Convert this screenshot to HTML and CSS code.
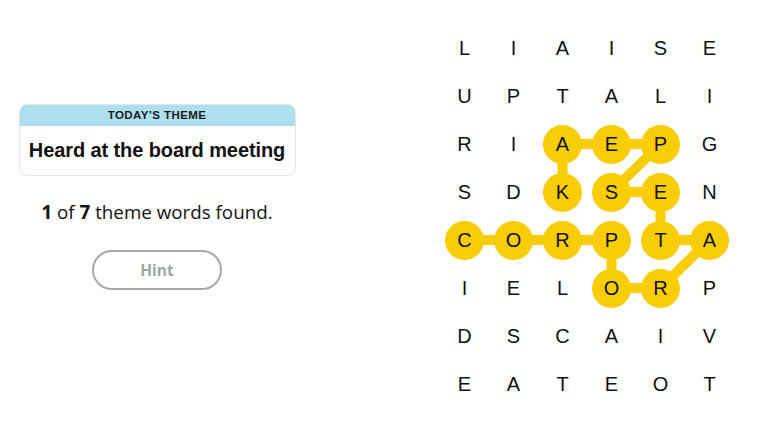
FILE: index.html
```html
<!DOCTYPE html>
<html>
<head>
<meta charset="utf-8">
<link rel="stylesheet" href="styles.css">
</head>
<body>
<main class="page">
  <section class="side">
    <div class="theme-card">
      <div class="theme-head">TODAY’S THEME</div>
      <div class="theme-title">Heard at the board meeting</div>
    </div>
    <p class="progress"><b>1</b> of <b>7</b> theme words found.</p>
    <button class="hint">Hint</button>
  </section>
  <section class="board">
    <svg class="links" width="294" height="384" viewBox="0 0 294 384">
      <polyline points="24.5,216 73.5,216 122.5,216 171.5,216 171.5,264 220.5,264 269.5,216 220.5,216 220.5,168 171.5,168 220.5,120 171.5,120 122.5,120 122.5,168" fill="none" stroke="#f8cd05" stroke-width="10" stroke-linejoin="round"/>
    </svg>
    <div class="grid">
      <span class="cell">L</span><span class="cell">I</span><span class="cell">A</span><span class="cell">I</span><span class="cell">S</span><span class="cell">E</span>
      <span class="cell">U</span><span class="cell">P</span><span class="cell">T</span><span class="cell">A</span><span class="cell">L</span><span class="cell">I</span>
      <span class="cell">R</span><span class="cell">I</span><span class="cell on">A</span><span class="cell on">E</span><span class="cell on">P</span><span class="cell">G</span>
      <span class="cell">S</span><span class="cell">D</span><span class="cell on">K</span><span class="cell on">S</span><span class="cell on">E</span><span class="cell">N</span>
      <span class="cell on">C</span><span class="cell on">O</span><span class="cell on">R</span><span class="cell on">P</span><span class="cell on">T</span><span class="cell on">A</span>
      <span class="cell">I</span><span class="cell">E</span><span class="cell">L</span><span class="cell on">O</span><span class="cell on">R</span><span class="cell">P</span>
      <span class="cell">D</span><span class="cell">S</span><span class="cell">C</span><span class="cell">A</span><span class="cell">I</span><span class="cell">V</span>
      <span class="cell">E</span><span class="cell">A</span><span class="cell">T</span><span class="cell">E</span><span class="cell">O</span><span class="cell">T</span>
    </div>
  </section>
</main>
</body>
</html>
```

FILE: styles.css
```css
* { box-sizing: border-box; }
html, body { margin: 0; padding: 0; background: #fff; }
body {
  width: 768px;
  height: 432px;
  overflow: hidden;
  font-family: "Liberation Sans", Arial, sans-serif;
  color: #121212;
}
.page {
  display: flex;
  height: 432px;
}
.side {
  width: 314px;
  padding-top: 104px;
  display: flex;
  flex-direction: column;
  align-items: center;
}
.theme-card {
  width: 277px;
  border: 1px solid #e6e6e6;
  border-radius: 8px;
  overflow: hidden;
  background: #fff;
}
.theme-head {
  background: #aedfee;
  height: 21px;
  line-height: 21px;
  text-align: center;
  font-size: 11.5px;
  font-weight: 700;
  letter-spacing: 0.4px;
  color: #1a1a1a;
}
.theme-title {
  height: 49px;
  line-height: 48px;
  text-align: center;
  font-size: 20px;
  font-weight: 700;
  letter-spacing: -0.1px;
}
.progress {
  margin: 25px 0 0;
  font-family: "Open Sans", "Liberation Sans", sans-serif;
  font-size: 18.8px;
  line-height: 22px;
}
.progress b { font-weight: 700; }
.hint {
  margin-top: 27px;
  width: 130px;
  height: 40px;
  border: 2px solid #a8a8a8;
  border-radius: 20px;
  background: #fff;
  color: #a3a3a3;
  font-family: "Open Sans", "Liberation Sans", sans-serif;
  font-size: 15.5px;
  font-weight: 700;
}
.board {
  position: relative;
  margin-left: 126px;
  margin-top: 24px;
  width: 294px;
  height: 384px;
}
.links {
  position: absolute;
  left: 0;
  top: 0;
}
.grid {
  position: relative;
  display: grid;
  grid-template-columns: repeat(6, 49px);
  grid-template-rows: repeat(8, 48px);
}
.cell {
  justify-self: center;
  align-self: center;
  width: 39px;
  height: 39px;
  border-radius: 50%;
  display: flex;
  align-items: center;
  justify-content: center;
  font-size: 20px;
  color: #121212;
}
.cell.on { background: #f8cd05; }
```
